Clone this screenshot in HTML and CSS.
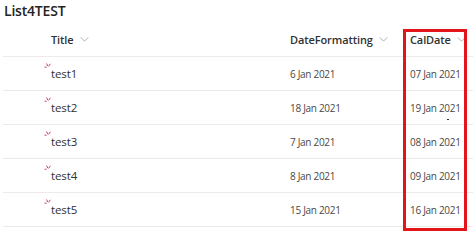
FILE: index.html
```html
<!DOCTYPE html>
<html>
<head>
<meta charset="utf-8">
<link rel="stylesheet" href="styles.css">
</head>
<body>
<div class="page">
  <h1 class="list-title">List4TEST</h1>
  <div class="grid">
    <div class="row head">
      <div class="cell c-title"><span class="hd">Title</span><svg class="chev" viewBox="0 0 10 6"><path d="M0.5 0.5 L5 5 L9.5 0.5" /></svg></div>
      <div class="cell c-fmt"><span class="hd">DateFormatting</span><svg class="chev" viewBox="0 0 10 6"><path d="M0.5 0.5 L5 5 L9.5 0.5" /></svg></div>
      <div class="cell c-cal"><span class="hd">CalDate</span><svg class="chev" viewBox="0 0 10 6"><path d="M0.5 0.5 L5 5 L9.5 0.5" /></svg></div>
    </div>
    <div class="row">
      <div class="cell c-title"><span class="name"><svg class="glint" viewBox="0 0 8 7"><path d="M0.5 5.2 H2.6 M2.6 1.5 L3.8 4.2 M6.4 1.8 L4.6 4.4" /></svg>test1</span></div>
      <div class="cell c-fmt"><span class="date">6 Jan 2021</span></div>
      <div class="cell c-cal"><span class="date">07 Jan 2021</span></div>
    </div>
    <div class="row">
      <div class="cell c-title"><span class="name"><svg class="glint" viewBox="0 0 8 7"><path d="M0.5 5.2 H2.6 M2.6 1.5 L3.8 4.2 M6.4 1.8 L4.6 4.4" /></svg>test2</span></div>
      <div class="cell c-fmt"><span class="date">18 Jan 2021</span></div>
      <div class="cell c-cal"><span class="date">19 Jan 2021</span><span class="dot"></span></div>
    </div>
    <div class="row">
      <div class="cell c-title"><span class="name"><svg class="glint" viewBox="0 0 8 7"><path d="M0.5 5.2 H2.6 M2.6 1.5 L3.8 4.2 M6.4 1.8 L4.6 4.4" /></svg>test3</span></div>
      <div class="cell c-fmt"><span class="date">7 Jan 2021</span></div>
      <div class="cell c-cal"><span class="date">08 Jan 2021</span></div>
    </div>
    <div class="row">
      <div class="cell c-title"><span class="name"><svg class="glint" viewBox="0 0 8 7"><path d="M0.5 5.2 H2.6 M2.6 1.5 L3.8 4.2 M6.4 1.8 L4.6 4.4" /></svg>test4</span></div>
      <div class="cell c-fmt"><span class="date">8 Jan 2021</span></div>
      <div class="cell c-cal"><span class="date">09 Jan 2021</span></div>
    </div>
    <div class="row">
      <div class="cell c-title"><span class="name"><svg class="glint" viewBox="0 0 8 7"><path d="M0.5 5.2 H2.6 M2.6 1.5 L3.8 4.2 M6.4 1.8 L4.6 4.4" /></svg>test5</span></div>
      <div class="cell c-fmt"><span class="date">15 Jan 2021</span></div>
      <div class="cell c-cal"><span class="date">16 Jan 2021</span></div>
    </div>
    <div class="highlight"></div>
  </div>
</div>
</body>
</html>
```
FILE: styles.css
```css
html, body {
  margin: 0;
  padding: 0;
  background: #ffffff;
}
body {
  font-family: "Open Sans", "Noto Sans", "Liberation Sans", sans-serif;
  color: #323130;
  width: 474px;
  height: 238px;
  overflow: hidden;
}
.page {
  padding: 0 0 0 4px;
}
.list-title {
  margin: 0;
  height: 23px;
  font-size: 14px;
  font-weight: 600;
  line-height: 21px;
  color: #252423;
  letter-spacing: -0.2px;
}
.grid {
  position: relative;
  margin-left: -1px;
  width: 470px;
}
.row {
  display: flex;
  align-items: center;
  height: 33px;
  border-bottom: 1px solid #edebe9;
}
.cell {
  display: flex;
  align-items: center;
  position: relative;
}
.c-title {
  width: 286px;
  padding-left: 48px;
  box-sizing: border-box;
}
.c-fmt {
  width: 120px;
  padding-left: 1px;
  box-sizing: border-box;
}
.c-cal {
  flex: 1;
  padding-left: 1px;
}
.hd {
  font-size: 11px;
  font-weight: 600;
  color: #323130;
  letter-spacing: -0.1px;
}
.chev {
  width: 9px;
  height: 5px;
  margin-left: 6px;
  fill: none;
  stroke: #a19f9d;
  stroke-width: 1;
}
.name {
  position: relative;
  font-size: 11.5px;
  color: #323130;
  letter-spacing: -0.1px;
}
.glint {
  position: absolute;
  left: -7px;
  top: -4px;
  width: 8px;
  height: 7px;
  fill: none;
  stroke: #c4314b;
  stroke-width: 0.9;
}
.date {
  font-size: 10px;
  letter-spacing: -0.3px;
  color: #4a4846;
}
.dot {
  position: absolute;
  left: 38px;
  top: 18px;
  width: 1.5px;
  height: 1.5px;
  background: #323130;
}
.highlight {
  position: absolute;
  left: 400px;
  top: 6px;
  width: 58px;
  height: 196px;
  border: 3px solid #e3151a;
}
```
